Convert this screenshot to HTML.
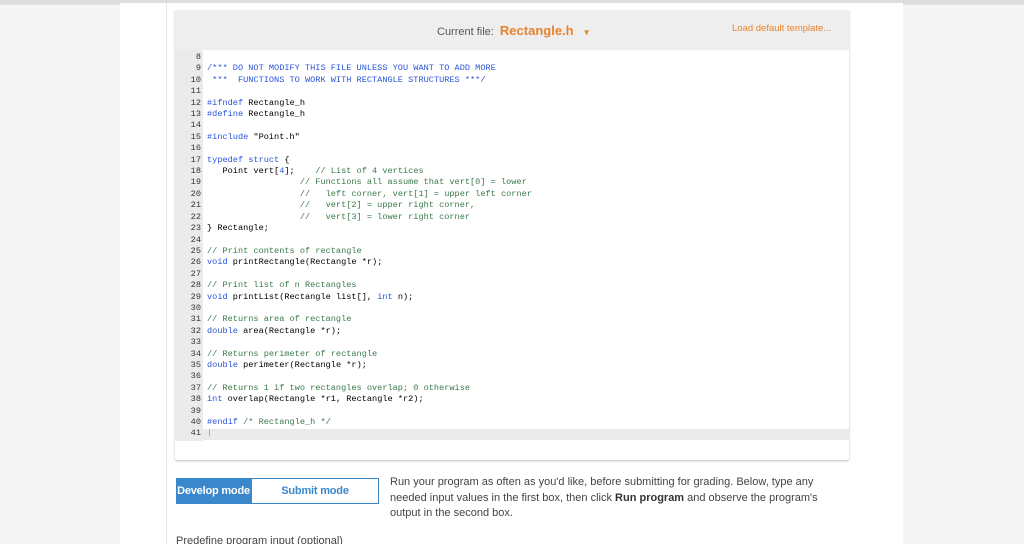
<!DOCTYPE html><html><head><style>
html,body{margin:0;width:1024px;height:544px;overflow:hidden}
body{background:#f5f5f5;font-family:"Liberation Sans",sans-serif;position:relative}
.top{position:absolute;left:0;top:0;width:1024px;height:3px;background:#ddd;box-shadow:0 1px 2px #ccc}
.panel{position:absolute;left:120px;top:3px;width:783px;height:541px;background:#fff}
.vl{position:absolute;left:166px;top:3px;width:1px;height:541px;background:#e6e6e6}
.ed{position:absolute;left:175px;top:10px;width:674px;height:450px;background:#fff;box-shadow:0 1px 2px #bbb;overflow:hidden}
.hd{height:40px;background:#eee;position:relative;font-size:11px;color:#555}
.gut{position:absolute;left:0;top:40px;width:28px;height:391px;background:#ebebeb}
.code{position:absolute;left:0;top:42px;width:674px;font:8.6px/11.42px "Liberation Mono",monospace;color:#000}
.code div{height:11.42px;white-space:pre}
.n{display:inline-block;width:26px;text-align:right;color:#333;margin-right:6px}
.k{color:#2a55d8}.c{color:#3a7a4a}.b{color:#2a55d8}
.hl{position:absolute;left:28px;top:419px;width:646px;height:11px;background:#ebebeb}
.btn{position:absolute;top:478px;height:26px;font-size:11px;font-weight:bold;line-height:24px;text-align:center;white-space:nowrap;box-sizing:border-box;letter-spacing:-0.2px}
.txt{position:absolute;left:390px;top:475px;width:440px;font-size:11px;line-height:15.5px;color:#444}
</style></head><body>
<div class="top"></div><div class="panel"></div><div class="vl"></div>
<div class="ed">
<div class="hd"><span style="position:absolute;left:262px;top:13px">Current file: <span style="color:#e8832a;font-size:13px;font-weight:bold;margin-left:3px">Rectangle.h</span> <span style="color:#e8832a;font-size:8px;margin-left:6px">▼</span></span><span style="position:absolute;left:557px;top:13px;color:#e8832a;font-size:9.5px">Load default template...</span></div>
<div class="gut"></div><div class="hl"></div>
<div class="code"><div><span class="n">8</span></div><div><span class="n">9</span><span class="b">/*** DO NOT MODIFY THIS FILE UNLESS YOU WANT TO ADD MORE</span></div><div><span class="n">10</span><span class="b"> ***  FUNCTIONS TO WORK WITH RECTANGLE STRUCTURES ***/</span></div><div><span class="n">11</span></div><div><span class="n">12</span><span class="k">#ifndef</span> Rectangle_h</div><div><span class="n">13</span><span class="k">#define</span> Rectangle_h</div><div><span class="n">14</span></div><div><span class="n">15</span><span class="k">#include</span> "Point.h"</div><div><span class="n">16</span></div><div><span class="n">17</span><span class="k">typedef struct</span> {</div><div><span class="n">18</span>   Point vert[<span class="k">4</span>];    <span class="c">// List of 4 vertices</span></div><div><span class="n">19</span>                  <span class="c">// Functions all assume that vert[0] = lower</span></div><div><span class="n">20</span>                  <span class="c">//   left corner, vert[1] = upper left corner</span></div><div><span class="n">21</span>                  <span class="c">//   vert[2] = upper right corner,</span></div><div><span class="n">22</span>                  <span class="c">//   vert[3] = lower right corner</span></div><div><span class="n">23</span>} Rectangle;</div><div><span class="n">24</span></div><div><span class="n">25</span><span class="c">// Print contents of rectangle</span></div><div><span class="n">26</span><span class="k">void</span> printRectangle(Rectangle *r);</div><div><span class="n">27</span></div><div><span class="n">28</span><span class="c">// Print list of n Rectangles</span></div><div><span class="n">29</span><span class="k">void</span> printList(Rectangle list[], <span class="k">int</span> n);</div><div><span class="n">30</span></div><div><span class="n">31</span><span class="c">// Returns area of rectangle</span></div><div><span class="n">32</span><span class="k">double</span> area(Rectangle *r);</div><div><span class="n">33</span></div><div><span class="n">34</span><span class="c">// Returns perimeter of rectangle</span></div><div><span class="n">35</span><span class="k">double</span> perimeter(Rectangle *r);</div><div><span class="n">36</span></div><div><span class="n">37</span><span class="c">// Returns 1 if two rectangles overlap; 0 otherwise</span></div><div><span class="n">38</span><span class="k">int</span> overlap(Rectangle *r1, Rectangle *r2);</div><div><span class="n">39</span></div><div><span class="n">40</span><span class="k">#endif</span> <span class="c">/* Rectangle_h */</span></div><div><span class="n">41</span><span style="color:#999">|</span></div></div>
</div>
<div class="btn" style="left:176px;width:75px;background:#3a87cc;color:#fff;border:1px solid #3a87cc">Develop mode</div>
<div class="btn" style="left:251px;width:128px;background:#fff;color:#3a87cc;border:1px solid #3a87cc">Submit mode</div>
<div class="txt">Run your program as often as you'd like, before submitting for grading. Below, type any needed input values in the first box, then click <b style="color:#333">Run program</b> and observe the program's output in the second box.</div>
<div style="position:absolute;left:176px;top:535px;font-size:11px;color:#444">Predefine program input (optional)</div>
</body></html>
